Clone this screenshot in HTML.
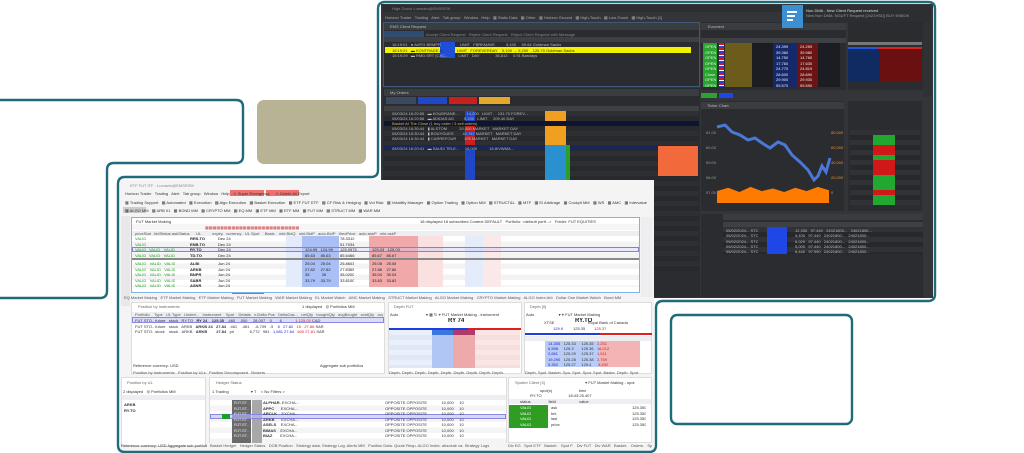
<!DOCTYPE html>
<html><head><meta charset="utf-8"><style>
*{margin:0;padding:0;box-sizing:border-box}
body{width:1024px;height:453px;background:#fff;position:relative;overflow:hidden;font-family:"Liberation Sans",sans-serif}
.a{position:absolute}
.t{position:absolute;font-size:4px;line-height:5px;white-space:nowrap;color:#bbb;overflow:hidden}
.d{color:#333}
</style></head><body>

<div class="a" style="left:257px;top:100px;width:109px;height:64px;background:#b8b394;border-radius:7px"></div>

<div class="a" style="left:381px;top:4px;width:552px;height:294px;background:#333539"></div>
<div class="a" style="left:383px;top:5px;width:548px;height:7px;background:#2c2e31"></div>
<div class="t" style="left:392px;top:6px;color:#888">High-Touch Lumazio@EMSRISK</div>
<div class="t" style="left:385px;top:15px;color:#aaa">Horizon Trader &nbsp; Trading &nbsp; Alert &nbsp; Tab group &nbsp; Window &nbsp; Help &nbsp; ▦ Static Data &nbsp; ▦ Other &nbsp; ▦ Horizon Ground &nbsp; ▦ High-Touch &nbsp; ▦ Low-Touch &nbsp; ▦ High-Touch [1]</div>

<div class="a" style="left:383px;top:22px;width:317px;height:65px;background:#2a2c2f;border:1px solid #3f5a78"></div>
<div class="a" style="left:384px;top:23px;width:315px;height:7px;background:#3a3c40"></div>
<div class="t" style="left:390px;top:24px">EMS Client Request</div>
<div class="a" style="left:384px;top:31px;width:40px;height:6px;background:#2f4d73"></div>
<div class="t" style="left:426px;top:32px;color:#888">Accept Client Request &nbsp; Reject Client Request &nbsp; Reject Client Request with Message</div>
<div class="a" style="left:384px;top:37px;width:315px;height:5px;background:#3e4044"></div>
<div class="a" style="left:385px;top:47px;width:306px;height:6px;background:#f3f000"></div>
<div class="a" style="left:440px;top:42px;width:15px;height:16px;background:#1f4ed8"></div>
<div class="t" style="left:392px;top:42px">16:19:01 &nbsp; ● AXPG BRMPR &nbsp;&nbsp;&nbsp;&nbsp;&nbsp;&nbsp;&nbsp;&nbsp;&nbsp;&nbsp;&nbsp;&nbsp;&nbsp;&nbsp;&nbsp; LIMIT &nbsp; FBRKMAVE &nbsp;&nbsp;&nbsp;&nbsp;&nbsp;&nbsp;&nbsp;&nbsp; 5,100 &nbsp;&nbsp;&nbsp; 59.64 Goldman Sachs</div>
<div class="t" style="left:392px;top:48px;color:#333">16:19:21 &nbsp; ▬ KONTRADE-N &nbsp;&nbsp;&nbsp;&nbsp;&nbsp;&nbsp;&nbsp;&nbsp;&nbsp;&nbsp;&nbsp; LIMIT &nbsp; FOREVERDAY &nbsp;&nbsp; 5,100 → 5,200 &nbsp;&nbsp; 126.70 Goldman Sachs</div>
<div class="t" style="left:392px;top:53px">16:19:29 &nbsp; ▬ RMD.SRT (CXC... &nbsp;&nbsp;&nbsp;&nbsp;&nbsp;&nbsp;&nbsp; LIMIT &nbsp; DAY &nbsp;&nbsp;&nbsp;&nbsp;&nbsp;&nbsp;&nbsp;&nbsp;&nbsp;&nbsp;&nbsp;&nbsp; 36,813 &nbsp;&nbsp;&nbsp; 0.91 Barclays</div>

<div class="a" style="left:383px;top:88px;width:317px;height:209px;background:#2a2c2f"></div>
<div class="a" style="left:384px;top:89px;width:315px;height:7px;background:#3a3c40"></div>
<div class="t" style="left:390px;top:90px">My Orders</div>
<div class="a" style="left:386px;top:97px;width:30px;height:7px;background:#3b4a60"></div>
<div class="a" style="left:418px;top:97px;width:29px;height:7px;background:#1f47c8"></div>
<div class="a" style="left:449px;top:97px;width:28px;height:7px;background:#c8201e"></div>
<div class="a" style="left:479px;top:97px;width:31px;height:7px;background:#e2a92c"></div>
<div class="a" style="left:384px;top:106px;width:315px;height:5px;background:#3e4044"></div>
<div class="a" style="left:384px;top:111px;width:315px;height:160px;background:repeating-linear-gradient(#2d2f33 0 5px,#27292c 5px 10px)"></div>
<div class="a" style="left:384px;top:121px;width:315px;height:5px;background:#0d1630"></div>
<div class="a" style="left:384px;top:145px;width:315px;height:5px;background:#1a2558"></div>
<div class="a" style="left:465px;top:111px;width:10px;height:10px;background:#1f47c8"></div>
<div class="a" style="left:465px;top:126px;width:10px;height:19px;background:linear-gradient(#c8201e 0 5px,#1f47c8 5px 10px,#c8201e 10px)"></div>
<div class="a" style="left:465px;top:150px;width:10px;height:30px;background:#1f47c8"></div>
<div class="a" style="left:545px;top:111px;width:21px;height:10px;background:#f0a020"></div>
<div class="a" style="left:545px;top:126px;width:21px;height:19px;background:#f0a020"></div>
<div class="a" style="left:545px;top:145px;width:21px;height:35px;background:#2a90d0"></div>
<div class="a" style="left:566px;top:145px;width:4px;height:35px;background:#2aa02a"></div>
<div class="a" style="left:658px;top:146px;width:40px;height:30px;background:#f26a3c"></div>
<div class="t" style="left:392px;top:111px">05/03/24 16:20:55 &nbsp; ▬ KOUDRANE... &nbsp;&nbsp;&nbsp;&nbsp;&nbsp; 14,200 &nbsp; LIMIT &nbsp;&nbsp;&nbsp; 131.70 FOREV...</div>
<div class="t" style="left:392px;top:116px">05/03/24 16:20:56 &nbsp; ▬ ADIDAS AG &nbsp;&nbsp;&nbsp;&nbsp;&nbsp;&nbsp;&nbsp; 5,200 &nbsp; LIMIT &nbsp;&nbsp;&nbsp; 209.40 DAY</div>
<div class="t" style="left:392px;top:121px;color:#e2b040">Basket At The Close (1 buy order / 3 sell orders)</div>
<div class="t" style="left:392px;top:126px">05/03/24 16:30:44 &nbsp; ▮ ALSTOM &nbsp;&nbsp;&nbsp;&nbsp;&nbsp;&nbsp;&nbsp;&nbsp;&nbsp; 20,000 MARKET &nbsp; MARKET DAY</div>
<div class="t" style="left:392px;top:131px">05/03/24 16:30:44 &nbsp; ▮ BOUYGUES &nbsp;&nbsp;&nbsp;&nbsp;&nbsp;&nbsp; 42,787 MARKET &nbsp; MARKET DAY</div>
<div class="t" style="left:392px;top:136px">05/03/24 16:30:44 &nbsp; ▮ CARREFOUR &nbsp;&nbsp;&nbsp;&nbsp;&nbsp; 195 MARKET &nbsp; MARKET DAY</div>
<div class="t" style="left:392px;top:146px">05/03/24 16:20:41 &nbsp; ▬ SAUDI TELE... &nbsp;&nbsp;&nbsp; 18,000 &nbsp;&nbsp;&nbsp;&nbsp;&nbsp;&nbsp;&nbsp;&nbsp;&nbsp; 16.8/VWMA...</div>

<div class="a" style="left:701px;top:22px;width:145px;height:68px;background:#2a2c2f"></div>
<div class="a" style="left:701px;top:23px;width:145px;height:7px;background:#3a3c40"></div>
<div class="t" style="left:708px;top:24px">Euronext</div>
<div class="a" style="left:701px;top:38px;width:145px;height:5px;background:#3e4044"></div>
<div class="a" style="left:703px;top:43px;width:14px;height:44px;background:#2aa330"></div>
<div class="a" style="left:719px;top:43px;width:5px;height:44px;background:repeating-linear-gradient(#d12 0 2px,#fff 2px 3px,#24d 3px 5px)"></div>
<div class="a" style="left:725px;top:43px;width:27px;height:44px;background:#6c5c1c"></div>
<div class="a" style="left:752px;top:43px;width:21px;height:44px;background:#1c1d22"></div>
<div class="a" style="left:773px;top:43px;width:24px;height:44px;background:#14286a"></div>
<div class="a" style="left:797px;top:43px;width:21px;height:44px;background:#6a1414"></div>
<div class="a" style="left:818px;top:43px;width:22px;height:44px;background:#1c1d22"></div>
<div class="t" style="left:705px;top:44px;line-height:5.5px;color:#eee">OPEN<br>OPEN<br>OPEN<br>OPEN<br>OPEN<br>Close<br>OPEN<br>OPEN</div>
<div class="t" style="left:776px;top:44px;line-height:5.5px;color:#eee">24.399<br>39.360<br>14.750<br>17.760<br>24.770<br>28.600<br>29.900<br>59.570</div>
<div class="t" style="left:800px;top:44px;line-height:5.5px;color:#eee">24.259<br>39.980<br>14.760<br>17.630<br>24.819<br>28.690<br>29.930<br>59.590</div>
<div class="a" style="left:701px;top:93px;width:16px;height:5px;background:#2aa330"></div>
<div class="a" style="left:719px;top:93px;width:14px;height:5px;background:#1f47e8"></div>

<div class="a" style="left:848px;top:22px;width:75px;height:68px;background:#2a2c2f"></div>
<div class="a" style="left:848px;top:42px;width:74px;height:3px;background:#777"></div>
<div class="a" style="left:848px;top:47px;width:74px;height:2px;background:linear-gradient(90deg,#2255dd 0 40%,#dd2222 40%)"></div>
<div class="a" style="left:848px;top:50px;width:32px;height:32px;background:#102a62"></div>
<div class="a" style="left:880px;top:50px;width:42px;height:32px;background:#6a1010"></div>
<div class="a" style="left:923px;top:22px;width:9px;height:75px;background:#2f3135"></div>

<div class="a" style="left:782px;top:5px;width:21px;height:23px;background:#3c8fd0"></div>
<div class="a" style="left:787px;top:11px;width:10px;height:2px;background:#fff"></div>
<div class="a" style="left:787px;top:15px;width:8px;height:2px;background:#fff"></div>
<div class="a" style="left:787px;top:19px;width:6px;height:2px;background:#fff"></div>
<div class="a" style="left:803px;top:5px;width:128px;height:17px;background:#2c2e31"></div>
<div class="t" style="left:806px;top:8px;color:#ddd">Non DMA - New Client Request received</div>
<div class="t" style="left:806px;top:13px;color:#999;width:122px">New Non DMA: NGUFT Request [2421HSD] BUY ENBOK</div>

<div class="a" style="left:701px;top:101px;width:143px;height:110px;background:#2a2c2f"></div>
<div class="a" style="left:701px;top:102px;width:143px;height:7px;background:#3a3c40"></div>
<div class="t" style="left:707px;top:103px">Ticker Chart</div>
<div class="a" style="left:717px;top:186px;width:112px;height:17px;background:#ff7a00;clip-path:polygon(0 30%,10% 10%,20% 35%,30% 5%,40% 30%,50% 15%,60% 35%,70% 10%,80% 30%,90% 5%,100% 25%,100% 100%,0 100%)"></div>
<svg class="a" style="left:700px;top:110px" width="145" height="80"><polyline fill="none" stroke="#4a78d8" stroke-width="3" points="17,17 25,15 32,22 40,25 48,30 55,28 62,33 70,38 78,32 85,35 92,45 100,52 108,60 114,70 118,66 122,56 126,62 130,48"/></svg>
<div class="t" style="left:706px;top:125px;line-height:15px;color:#999">61.00<br>60.00<br>59.00<br>58.00<br>57.00</div>
<div class="t" style="left:831px;top:125px;line-height:15px;color:#e89030">80,000<br>60,000<br>40,000<br>20,000<br>0</div>

<div class="a" style="left:848px;top:101px;width:74px;height:110px;background:#2a2c2f"></div>
<div class="a" style="left:850px;top:130px;width:70px;height:75px;background:repeating-linear-gradient(#303236 0 5px,#26282b 5px 10px)"></div>
<div class="a" style="left:873px;top:135px;width:22px;height:70px;background:linear-gradient(#21a830 0 10px,#d01818 10px 20px,#21a830 20px 25px,#d01818 25px 40px,#21a830 40px 55px,#d01818 55px 60px,#21a830 60px)"></div>

<div class="a" style="left:701px;top:214px;width:31px;height:83px;background:#2a2c2f"></div>
<div class="a" style="left:723px;top:214px;width:200px;height:83px;background:#2a2c2f"></div>
<div class="a" style="left:723px;top:214px;width:200px;height:6px;background:#3a3c40"></div>
<div class="a" style="left:723px;top:222px;width:200px;height:5px;background:#3e4044"></div>
<div class="a" style="left:723px;top:227px;width:200px;height:27px;background:repeating-linear-gradient(#303236 0 5px,#26282b 5px 10px)"></div>
<div class="a" style="left:767px;top:227px;width:20px;height:27px;background:#1f47e8"></div>
<div class="t" style="left:726px;top:228px;line-height:5.3px">05/02/2024... STC<br>05/02/2024... STC<br>05/02/2024... STC<br>05/02/2024... STC<br>05/02/2024... STC</div>
<div class="t" style="left:795px;top:228px;line-height:5.3px;width:126px">12,330 &nbsp; 97.440 &nbsp; 24021800... &nbsp; 24021800...<br>4,100 &nbsp; 97.440 &nbsp; 24021800... &nbsp; 24021800...<br>6,029 &nbsp; 97.440 &nbsp; 24021800... &nbsp; 24021800...<br>5,000 &nbsp; 97.440 &nbsp; 24021800... &nbsp; 24021800...<br>6,440 &nbsp; 97.990 &nbsp; 24021800... &nbsp; 24021800...</div>

<div class="a" style="left:120px;top:180px;width:534px;height:271px;background:#f4f4f5"></div>
<div class="t d" style="left:130px;top:183px;color:#888">ETF FUT ITF - Lumazio@EMSRISK</div>
<div class="t d" style="left:125px;top:191px">Horizon Trader &nbsp; Trading &nbsp; Alert &nbsp; Tab group &nbsp; Window &nbsp; Help</div>
<div class="a" style="left:230px;top:190px;width:34px;height:6px;background:#f07070"></div>
<div class="a" style="left:266px;top:190px;width:33px;height:6px;background:#f07070"></div>
<div class="t d" style="left:233px;top:191px">⚠ Super Emergency &nbsp;&nbsp;&nbsp; ⚠ Delete All Export</div>
<div class="t d" style="left:125px;top:200px;width:525px">▦ Trading Support &nbsp; ▦ Automated &nbsp; ▦ Execution &nbsp; ▦ Algo Execution &nbsp; ▦ Basket Execution &nbsp; ▦ ETF FUT ETF &nbsp; ▦ CF Risk &amp; Hedging &nbsp; ▦ Vol Risk &nbsp; ▦ Volatility Manager &nbsp; ▦ Option Trading &nbsp; ▦ Option MM &nbsp; ▦ STRUCT&amp;L &nbsp; ▦ MTF &nbsp; ▦ EI Arbitrage &nbsp; ▦ Cockpit MM &nbsp; ▦ WS &nbsp; ▦ AMC &nbsp; ▦ Intervalue &nbsp; ▦ BR MM &nbsp; ▦ EQ MM LP DS</div>
<div class="a" style="left:123px;top:207px;width:23px;height:6px;background:#ccc"></div>
<div class="t d" style="left:125px;top:208px">▦ ALGO MM &nbsp; ▦ ARB 01 &nbsp; ▦ BOND MM &nbsp; ▦ CRYPTO MM &nbsp; ▦ EQ MM &nbsp; ▦ ETF MM &nbsp; ▦ ETF MM &nbsp; ▦ FUT MM &nbsp; ▦ STRUCT MM &nbsp; ▦ WAR MM</div>
<div class="a" style="left:121px;top:216px;width:9px;height:90px;background:#e8e8ea"></div>

<div class="a" style="left:131px;top:217px;width:509px;height:76px;background:#fff;border:1px solid #7fb2e5"></div>
<div class="t d" style="left:136px;top:219px">FUT Market Making</div>
<div class="t d" style="left:420px;top:219px;width:218px">18 displayed 18 subscribed Context DEFAULT &nbsp; Portfolio: &lt;default portf...&gt; &nbsp; Folder: FUT EQUITIES</div>
<div class="a" style="left:132px;top:224px;width:507px;height:6px;background:#f6f6f6"></div>
<div class="t" style="left:205px;top:225px;color:#d04040">▦▦▦▦▦▦▦▦▦▦▦▦▦▦▦▦▦▦▦▦▦▦▦▦▦</div>
<div class="a" style="left:132px;top:231px;width:507px;height:5px;background:#eceef2"></div>
<div class="t d" style="left:135px;top:231px;color:#555">priceStat &nbsp; bidStatus askStatus &nbsp;&nbsp;&nbsp;&nbsp; UL &nbsp;&nbsp;&nbsp;&nbsp;&nbsp;&nbsp;&nbsp;&nbsp; expiry &nbsp; currency &nbsp; UL Spot &nbsp;&nbsp;&nbsp; Basis &nbsp;&nbsp; mkt.BidQ &nbsp; mkt.BidP &nbsp; auto.BidP &nbsp; theoPrice &nbsp; auto.askP &nbsp; mkt.askP</div>
<div class="a" style="left:132px;top:236px;width:507px;height:51px;background:repeating-linear-gradient(#fff 0 5.5px,#f3f3f3 5.5px 11px)"></div>
<div class="a" style="left:286px;top:236px;width:16px;height:51px;background:#e4ecfb"></div>
<div class="a" style="left:302px;top:236px;width:37px;height:51px;background:#a9bff5"></div>
<div class="a" style="left:369px;top:236px;width:49px;height:51px;background:#f0a8a8"></div>
<div class="a" style="left:418px;top:236px;width:25px;height:51px;background:#fbe0e0"></div>
<div class="a" style="left:465px;top:236px;width:18px;height:51px;background:#e4ecfb"></div>
<div class="a" style="left:483px;top:236px;width:18px;height:51px;background:#fbe8e8"></div>
<div class="a" style="left:132px;top:247px;width:507px;height:5px;border:1px solid #8080e0;background:rgba(200,200,250,.4)"></div>
<div class="a" style="left:132px;top:258px;width:507px;height:2px;background:#888"></div>
<div class="t" style="left:135px;top:236px;line-height:5.5px;color:#1fa01f">VALID<br>VALID<br>VALID<br>VALID</div>
<div class="t" style="left:135px;top:261px;line-height:5.5px;color:#1fa01f">VALID &nbsp; VALID &nbsp; VALID<br>VALID &nbsp; VALID &nbsp; VALID<br>VALID &nbsp; VALID &nbsp; VALID<br>VALID &nbsp; VALID &nbsp; VALID<br>VALID &nbsp; VALID &nbsp; VALID</div>
<div class="t d" style="left:149px;top:247px;line-height:5.5px;color:#1fa01f">VALID &nbsp; VALID<br>VALID &nbsp; VALID</div>
<div class="t" style="left:190px;top:236px;line-height:5.5px;color:#222;font-weight:bold">RRS.TO<br>ENB.TO<br>RY.TO<br>TD.TO</div>
<div class="t" style="left:190px;top:261px;line-height:5.5px;color:#222;font-weight:bold">ALBI<br>ARKB<br>BNPR<br>SABR<br>ASNR</div>
<div class="t" style="left:218px;top:236px;line-height:5.5px;color:#222">Dec 24<br>Dec 24<br>Dec 24<br>Dec 24</div>
<div class="t" style="left:218px;top:261px;line-height:5.5px;color:#222">Jun 24<br>Jun 24<br>Jun 24<br>Jun 24<br>Jun 24</div>
<div class="t" style="left:305px;top:247px;line-height:5.5px;color:#222">124.99 &nbsp; 124.99<br>85.63 &nbsp;&nbsp;&nbsp; 85.63</div>
<div class="t" style="left:340px;top:236px;line-height:5.5px;color:#222">78.3312<br>51.7034<br>125.0975<br>85.6466</div>
<div class="t" style="left:305px;top:261px;line-height:5.5px;color:#222">25.04 &nbsp;&nbsp;&nbsp; 25.04<br>27.82 &nbsp;&nbsp;&nbsp; 27.82<br>35 &nbsp;&nbsp;&nbsp;&nbsp;&nbsp;&nbsp;&nbsp;&nbsp;&nbsp; 35<br>33.79 &nbsp;&nbsp;&nbsp; 33.79</div>
<div class="t" style="left:340px;top:261px;line-height:5.5px;color:#222">25.8603<br>27.8365<br>35.0200<br>33.8100</div>
<div class="t" style="left:372px;top:247px;line-height:5.5px;color:#222">125.03 &nbsp; 125.03<br>85.67 &nbsp;&nbsp; 85.67</div>
<div class="t" style="left:372px;top:261px;line-height:5.5px;color:#222">25.08 &nbsp;&nbsp; 25.08<br>27.86 &nbsp;&nbsp; 27.86<br>35.04 &nbsp;&nbsp; 35.04<br>33.83 &nbsp;&nbsp; 33.83</div>
<div class="a" style="left:641px;top:217px;width:11px;height:80px;background:#eeeef0"></div>
<div class="t" style="left:124px;top:295px;color:#555;width:528px">EQ Market Making &nbsp; ETF Market Making &nbsp; ETF Market Making &nbsp; FUT Market Making &nbsp; WAR Market Making &nbsp; EL Market Watch &nbsp; AMC Market Making &nbsp; STRUCT Market Making &nbsp; ALGO Market Making &nbsp; CRYPTO Market Making &nbsp; ALGO Index Arb &nbsp; Dollar One Market Watch &nbsp; Bond MM</div>
<div class="a" style="left:232px;top:293px;width:32px;height:1px;background:#4a8ae0"></div>

<div class="a" style="left:131px;top:302px;width:254px;height:72px;background:#fff;border:1px solid #ddd"></div>
<div class="t d" style="left:138px;top:304px;color:#666">Position by Instruments</div>
<div class="t d" style="left:302px;top:304px">1 displayed &nbsp; ◎ Portfolios MM</div>
<div class="a" style="left:132px;top:312px;width:252px;height:5px;background:#eceef2"></div>
<div class="t d" style="left:135px;top:312px;color:#555;width:248px">Portfolio &nbsp;&nbsp; Type &nbsp; UL Type &nbsp; Underl... &nbsp; Instrument &nbsp;&nbsp; Spot &nbsp;&nbsp; Details &nbsp; n.Delta Pos &nbsp; DeltaCas... &nbsp; netQty &nbsp; boughtQty &nbsp; avgBought &nbsp; soldQty &nbsp; avgSold &nbsp; Cur</div>
<div class="a" style="left:132px;top:317px;width:252px;height:6px;background:#dcdcf8;border:1px solid #8888e0"></div>
<div class="t d" style="left:135px;top:318px;line-height:5.5px;width:248px">FUT STO.. future &nbsp; stock &nbsp; RY.TO &nbsp; <b>RY 24</b> &nbsp;&nbsp; <b>125.35</b> &nbsp; .460 &nbsp;&nbsp; .000 &nbsp;&nbsp;&nbsp; 28,007 &nbsp;&nbsp; 0 &nbsp;&nbsp;&nbsp;&nbsp;&nbsp; <span style="color:#22c">6</span> &nbsp;&nbsp;&nbsp;&nbsp;&nbsp;&nbsp;&nbsp;&nbsp;&nbsp;&nbsp; <span style="color:#c22">1 125.03</span> CAD<br>FUT STO.. future &nbsp; stock &nbsp; ARKB &nbsp; <b>ARKB 24</b> &nbsp; <b>27.84</b> &nbsp; .461 &nbsp;&nbsp; .461 &nbsp;&nbsp;&nbsp; -6,709 &nbsp; -9 &nbsp;&nbsp; <span style="color:#22c">6 &nbsp; 27.82</span> &nbsp; <span style="color:#c22">15 &nbsp; 27.86</span> SAR<br>FUT STO.. stock &nbsp;&nbsp; stock &nbsp; ARKB &nbsp; <b>ARKB</b> &nbsp;&nbsp;&nbsp;&nbsp;&nbsp;&nbsp; <b>27.84</b> &nbsp; pri &nbsp;&nbsp;&nbsp;&nbsp;&nbsp;&nbsp;&nbsp;&nbsp;&nbsp;&nbsp;&nbsp;&nbsp; 6,772 &nbsp; 981 &nbsp; <span style="color:#22c">1,581 27.84</span> &nbsp; <span style="color:#c22">600 27.81</span> SAR</div>
<div class="t d" style="left:133px;top:363px">Reference currency: USD</div>
<div class="t d" style="left:320px;top:363px">Aggregate sub portfolios</div>
<div class="t d" style="left:133px;top:370px;color:#555">Position by Instruments &nbsp; Position by ULs &nbsp; Position Decomposed &nbsp; Brokers</div>

<div class="a" style="left:388px;top:302px;width:134px;height:72px;background:#fff;border:1px solid #ddd"></div>
<div class="t d" style="left:394px;top:304px;color:#666">Depth FUT</div>
<div class="t d" style="left:390px;top:312px;width:130px">Auto &nbsp;&nbsp;&nbsp;&nbsp;&nbsp;&nbsp;&nbsp;&nbsp;&nbsp;&nbsp;&nbsp;&nbsp;&nbsp;&nbsp;&nbsp;&nbsp;&nbsp;&nbsp;&nbsp;&nbsp;&nbsp;&nbsp;&nbsp; ▾ ▦ ↻ ⌖ FUT Market Making - instrument</div>
<div class="t" style="left:448px;top:318px;font-size:6px;line-height:6px;color:#222;font-weight:bold">RY 74</div>
<div class="a" style="left:389px;top:328px;width:79px;height:2px;background:#1f3ee0"></div>
<div class="a" style="left:468px;top:328px;width:53px;height:2px;background:#e02020"></div>
<div class="a" style="left:389px;top:330px;width:43px;height:38px;background:repeating-linear-gradient(#eaf0fb 0 5px,#e0e8f8 5px 10px)"></div>
<div class="a" style="left:432px;top:330px;width:21px;height:38px;background:#b0c6f5"></div>
<div class="a" style="left:453px;top:330px;width:22px;height:38px;background:#eeaaaa"></div>
<div class="a" style="left:475px;top:330px;width:45px;height:38px;background:repeating-linear-gradient(#fbe6e6 0 5px,#f8dddd 5px 10px)"></div>
<div class="a" style="left:432px;top:330px;width:21px;height:5px;background:#3a78e0"></div>
<div class="a" style="left:453px;top:330px;width:22px;height:5px;background:#b03a6a"></div>
<div class="t d" style="left:389px;top:370px;color:#555;width:132px">Depth. Depth. Depth. Depth. Depth. Depth. Depth. Depth. Depth.</div>

<div class="a" style="left:524px;top:302px;width:128px;height:72px;background:#fff;border:1px solid #ddd"></div>
<div class="t d" style="left:530px;top:304px;color:#666">Depth [0]</div>
<div class="t d" style="left:526px;top:312px;width:124px">Auto &nbsp;&nbsp;&nbsp;&nbsp;&nbsp;&nbsp;&nbsp;&nbsp;&nbsp;&nbsp;&nbsp;&nbsp;&nbsp;&nbsp;&nbsp;&nbsp;&nbsp;&nbsp;&nbsp;&nbsp; ▾ ⌖ FUT Market Making</div>
<div class="t d" style="left:544px;top:320px;width:106px">XTSE &nbsp;&nbsp;&nbsp;&nbsp;&nbsp;&nbsp;&nbsp;&nbsp;&nbsp;&nbsp;&nbsp;&nbsp;&nbsp;&nbsp;&nbsp;&nbsp;&nbsp;&nbsp;&nbsp;&nbsp;&nbsp;&nbsp;&nbsp;&nbsp;&nbsp;&nbsp;&nbsp;&nbsp; Royal Bank of Canada</div>
<div class="t" style="left:575px;top:318px;font-size:6px;line-height:6px;color:#222;font-weight:bold">RY.TO</div>
<div class="t d" style="left:553px;top:326px"><span style="color:#22c">129.9</span> &nbsp;&nbsp;&nbsp;&nbsp;&nbsp;&nbsp;&nbsp; 125.35 &nbsp;&nbsp;&nbsp;&nbsp;&nbsp;&nbsp; <span style="color:#c22">125.37</span></div>
<div class="a" style="left:525px;top:333px;width:75px;height:2px;background:#1f3ee0"></div>
<div class="a" style="left:600px;top:333px;width:52px;height:2px;background:#e02020"></div>
<div class="a" style="left:525px;top:336px;width:126px;height:5px;background:#eceef2"></div>
<div class="a" style="left:545px;top:341px;width:55px;height:26px;background:#b8ccf5"></div>
<div class="a" style="left:600px;top:341px;width:40px;height:26px;background:#f2b4b4"></div>
<div class="t d" style="left:548px;top:341px;line-height:5.2px"><span style="color:#22c">14,305</span> &nbsp; 125.33 &nbsp;&nbsp;&nbsp; 125.35 &nbsp; <span style="color:#c22">2,251</span><br><span style="color:#22c">6,598</span> &nbsp;&nbsp;&nbsp; 125.3 &nbsp;&nbsp;&nbsp;&nbsp;&nbsp; 125.36 &nbsp; <span style="color:#c22">16,012</span><br><span style="color:#22c">2,661</span> &nbsp;&nbsp;&nbsp; 125.29 &nbsp;&nbsp;&nbsp; 125.37 &nbsp; <span style="color:#c22">1,511</span><br><span style="color:#22c">19,290</span> &nbsp; 125.28 &nbsp;&nbsp;&nbsp; 125.38 &nbsp; <span style="color:#c22">2,769</span><br><span style="color:#22c">5,352</span> &nbsp;&nbsp;&nbsp; 125.27 &nbsp;&nbsp;&nbsp; 125.4 &nbsp;&nbsp;&nbsp;&nbsp; <span style="color:#c22">5,532</span></div>
<div class="t d" style="left:525px;top:370px;color:#555;width:126px">Depth. Spot. Basket. Spo. Spot. Spot. Spot. Baske. Depth. Spot.</div>

<div class="a" style="left:121px;top:377px;width:85px;height:70px;background:#fff;border:1px solid #ddd"></div>
<div class="t d" style="left:127px;top:380px;color:#666">Position by UL</div>
<div class="t d" style="left:123px;top:389px">2 displayed &nbsp; ◎ Portfolios MM</div>
<div class="a" style="left:122px;top:395px;width:83px;height:5px;background:#eceef2"></div>
<div class="t d" style="left:124px;top:402px;line-height:6px"><b>ARKB</b><br><b>RY.TO</b></div>
<div class="t d" style="left:121px;top:443px;width:86px">Reference currency: USD Aggregate sub portfolios</div>

<div class="a" style="left:209px;top:377px;width:298px;height:66px;background:#fff;border:1px solid #ddd"></div>
<div class="t d" style="left:216px;top:380px;color:#666">Hedger Status</div>
<div class="t d" style="left:212px;top:389px">1 Trading &nbsp;&nbsp;&nbsp;&nbsp;&nbsp;&nbsp;&nbsp;&nbsp;&nbsp;&nbsp;&nbsp;&nbsp;&nbsp;&nbsp;&nbsp;&nbsp;&nbsp;&nbsp; ▾ T &nbsp;&nbsp; &lt; No Filters &gt;</div>
<div class="a" style="left:210px;top:395px;width:296px;height:5px;background:#eceef2"></div>
<div class="a" style="left:210px;top:400px;width:296px;height:43px;background:repeating-linear-gradient(#fff 0 5.5px,#f4f4f4 5.5px 11px)"></div>
<div class="a" style="left:232px;top:400px;width:19px;height:43px;background:#6a6a6a"></div>
<div class="a" style="left:252px;top:400px;width:10px;height:43px;background:#a8a8a8"></div>
<div class="a" style="left:210px;top:414px;width:296px;height:5px;background:rgba(190,190,245,.6);border:1px solid #8888e0"></div>
<div class="a" style="left:222px;top:414px;width:8px;height:5px;background:#1aa02a"></div>
<div class="t d" style="left:234px;top:400px;line-height:5.5px;color:#eee">RJT.ST..<br>RJT.ST..<br>RJT.ST..<br>RJT.ST..<br>RJT.ST..<br>RJT.ST..<br>RJT.ST..</div>
<div class="t d" style="left:263px;top:400px;line-height:5.5px"><b>ALPHAR.</b> EXCHA...<br><b>APPC</b> &nbsp;&nbsp;&nbsp;&nbsp; EXCHA...<br><b>ARCLK</b> &nbsp;&nbsp; EXCHA...<br><b>ARKB</b> &nbsp;&nbsp;&nbsp;&nbsp; EXCHA...<br><b>ASELS</b> &nbsp;&nbsp; EXCHA...<br><b>BIMAS</b> &nbsp;&nbsp; EXCHA...<br><b>BIAZ</b> &nbsp;&nbsp;&nbsp;&nbsp;&nbsp; EXCHA...</div>
<div class="t d" style="left:385px;top:400px;line-height:5.5px">OPPOSITE OPPOSITE &nbsp;&nbsp;&nbsp;&nbsp;&nbsp;&nbsp;&nbsp;&nbsp;&nbsp;&nbsp;&nbsp; 10,000 &nbsp;&nbsp;&nbsp; 10<br>OPPOSITE OPPOSITE &nbsp;&nbsp;&nbsp;&nbsp;&nbsp;&nbsp;&nbsp;&nbsp;&nbsp;&nbsp;&nbsp; 10,000 &nbsp;&nbsp;&nbsp; 10<br>OPPOSITE OPPOSITE &nbsp;&nbsp;&nbsp;&nbsp;&nbsp;&nbsp;&nbsp;&nbsp;&nbsp;&nbsp;&nbsp; 10,000 &nbsp;&nbsp;&nbsp; 10<br>OPPOSITE OPPOSITE &nbsp;&nbsp;&nbsp;&nbsp;&nbsp;&nbsp;&nbsp;&nbsp;&nbsp;&nbsp;&nbsp; 10,000 &nbsp;&nbsp;&nbsp; 10<br>OPPOSITE OPPOSITE &nbsp;&nbsp;&nbsp;&nbsp;&nbsp;&nbsp;&nbsp;&nbsp;&nbsp;&nbsp;&nbsp; 10,000 &nbsp;&nbsp;&nbsp; 10<br>OPPOSITE OPPOSITE &nbsp;&nbsp;&nbsp;&nbsp;&nbsp;&nbsp;&nbsp;&nbsp;&nbsp;&nbsp;&nbsp; 10,000 &nbsp;&nbsp;&nbsp; 10<br>OPPOSITE OPPOSITE &nbsp;&nbsp;&nbsp;&nbsp;&nbsp;&nbsp;&nbsp;&nbsp;&nbsp;&nbsp;&nbsp; 10,000 &nbsp;&nbsp;&nbsp; 10</div>
<div class="t d" style="left:210px;top:443px;color:#555;width:296px">Basket Hedger &nbsp; Hedger Status &nbsp; DOB Position &nbsp; Strategy data. Strategy Log. Alerts MM &nbsp; Position Data. Quote Requ. ALGO Index. absolute va. Strategy Logs</div>

<div class="a" style="left:508px;top:377px;width:144px;height:66px;background:#fff;border:1px solid #ddd"></div>
<div class="t d" style="left:515px;top:380px;color:#666">Spotter Client [4]</div>
<div class="t d" style="left:585px;top:380px">⌖ FUT Market Making - spot</div>
<div class="t d" style="left:540px;top:388px">spot(s) &nbsp;&nbsp;&nbsp;&nbsp;&nbsp;&nbsp;&nbsp;&nbsp;&nbsp;&nbsp;&nbsp;&nbsp;&nbsp;&nbsp;&nbsp;&nbsp;&nbsp;&nbsp;&nbsp;&nbsp;&nbsp;&nbsp; time</div>
<div class="t d" style="left:530px;top:393px">RY.TO &nbsp;&nbsp;&nbsp;&nbsp;&nbsp;&nbsp;&nbsp;&nbsp;&nbsp;&nbsp;&nbsp;&nbsp;&nbsp;&nbsp;&nbsp;&nbsp;&nbsp;&nbsp;&nbsp;&nbsp;&nbsp;&nbsp; 18:43:25.407</div>
<div class="a" style="left:509px;top:399px;width:142px;height:5px;background:#eceef2"></div>
<div class="t d" style="left:520px;top:399px">status &nbsp;&nbsp;&nbsp;&nbsp;&nbsp;&nbsp;&nbsp;&nbsp;&nbsp;&nbsp;&nbsp;&nbsp;&nbsp;&nbsp; field &nbsp;&nbsp;&nbsp;&nbsp;&nbsp;&nbsp;&nbsp;&nbsp;&nbsp;&nbsp;&nbsp;&nbsp;&nbsp;&nbsp;&nbsp;&nbsp;&nbsp;&nbsp;&nbsp; value</div>
<div class="a" style="left:509px;top:405px;width:39px;height:23px;background:#2e9d22"></div>
<div class="t" style="left:520px;top:405px;line-height:5.7px;color:#fff">VALID<br>VALID<br>VALID<br>VALID</div>
<div class="t d" style="left:551px;top:405px;line-height:5.7px">ask<br>bid<br>last<br>price</div>
<div class="t d" style="left:632px;top:405px;line-height:5.7px">125.350<br>125.350<br>125.350<br>125.350</div>
<div class="t d" style="left:508px;top:443px;color:#555;width:144px">Div EG &nbsp; Spot ETF &nbsp; Basket. &nbsp; Spot F. &nbsp; Div FUT &nbsp; Div WAR &nbsp; Basket. &nbsp; Orders. &nbsp; Spotter.</div>

<svg class="a" style="left:0;top:0" width="1024" height="453">
<g fill="none" stroke="#1f6b7a" stroke-width="2.4">
<path d="M0,100 H236 Q243,100 243,107 V156 Q243,163 236,163 H114 Q107,163 107,170 V291 Q107,298 100,298 H0"/>
<path d="M378,170 V9 Q378,2 385,2 H928 Q935,2 935,9 V294 Q935,301 928,301 H663 Q656,301 656,308 V445 Q656,452 649,452 H125 Q118,452 118,445 V184 Q118,177 125,177 H371 Q378,177 378,170 Z"/>
<rect x="671" y="315" width="181" height="109" rx="6"/>
</g>
</svg>
</body></html>
